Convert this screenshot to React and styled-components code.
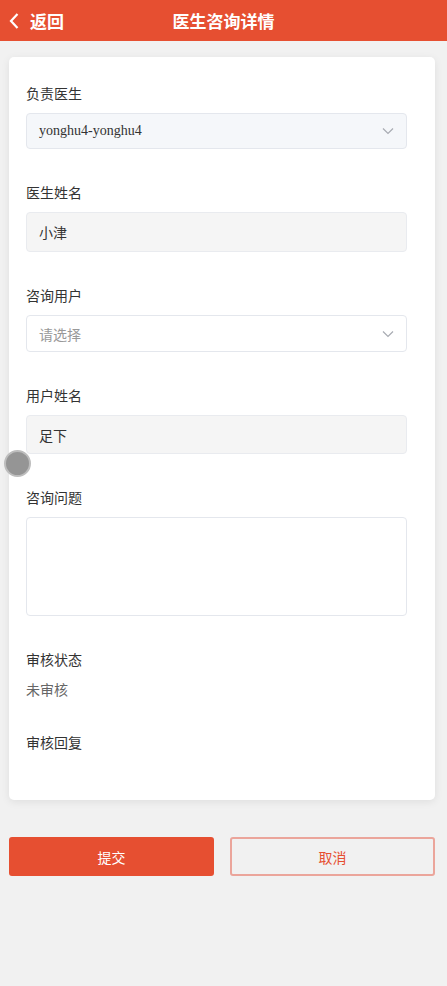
import React from 'react';
import styled, { createGlobalStyle } from 'styled-components';

const GlobalStyle = createGlobalStyle`
  html, body {
    margin: 0;
    padding: 0;
    background: #f1f1f1;
    font-family: "Noto Sans CJK SC", "Noto Sans", sans-serif;
  }
  * { box-sizing: border-box; }
`;

const Page = styled.div`
  position: relative;
  width: 447px;
  min-height: 986px;
  background: #f1f1f1;
`;

const Header = styled.div`
  height: 41px;
  background: #e64f31;
  display: flex;
  align-items: center;
  position: relative;
  color: #fff;
`;

const Back = styled.div`
  display: flex;
  align-items: center;
  gap: 11px;
  padding-left: 9px;
  font-size: 17px;
  font-weight: bold;
`;

const Title = styled.div`
  position: absolute;
  left: 0;
  right: 0;
  text-align: center;
  font-size: 17px;
  font-weight: bold;
  pointer-events: none;
`;

const Card = styled.div`
  margin: 16px 12px 0 9px;
  background: #fff;
  border-radius: 5px;
  box-shadow: 0 2px 8px rgba(0, 0, 0, 0.08);
  padding: 26px 28px 38px 17px;
`;

const Item = styled.div`
  margin-bottom: ${p => p.$mb ?? 33}px;
`;

const Label = styled.div`
  font-size: 14px;
  line-height: 20px;
  color: #333;
  margin-bottom: 10px;
`;

const Field = styled.div`
  height: ${p => p.$h || 37}px;
  border: 1px solid ${p => (p.$filled ? '#e9ebef' : '#e4e7ed')};
  border-radius: 4px;
  background: ${p => p.$bg || '#fff'};
  display: flex;
  align-items: center;
  justify-content: space-between;
  padding: 0 12px;
  font-size: 14px;
  color: ${p => p.$color || '#333'};
  font-family: ${p => (p.$serif ? '"Liberation Serif", serif' : 'inherit')};
`;

const Value = styled.div`
  font-size: 14px;
  line-height: 20px;
  color: #666;
`;

const Buttons = styled.div`
  display: flex;
  gap: 16px;
  margin: 37px 12px 0 9px;
`;

const Button = styled.div`
  flex: 1;
  height: 39px;
  border-radius: 3px;
  display: flex;
  align-items: center;
  justify-content: center;
  font-size: 14px;
  background: ${p => (p.$primary ? '#e64f31' : 'transparent')};
  color: ${p => (p.$primary ? '#fff' : '#e64f31')};
  border: 2px solid ${p => (p.$primary ? '#e64f31' : '#eba59b')};
`;

const TouchDot = styled.div`
  position: absolute;
  left: 4px;
  top: 450px;
  width: 27px;
  height: 27px;
  border-radius: 50%;
  background: #959595;
  border: 2px solid #bdbdbd;
`;

const Chevron = () => (
  <svg width="12" height="8" viewBox="0 0 12 8" fill="none">
    <path d="M1 1.5 6 6.5 11 1.5" stroke="#a8abb2" strokeWidth="1.2" />
  </svg>
);

const BackIcon = () => (
  <svg width="10" height="18" viewBox="0 0 10 18" fill="none">
    <path d="M8.5 2 2 9l6.5 7" stroke="#fff" strokeWidth="2.2" />
  </svg>
);

export default function App() {
  return (
    <Page>
      <GlobalStyle />
      <Header>
        <Back>
          <BackIcon />
          <span>返回</span>
        </Back>
        <Title>医生咨询详情</Title>
      </Header>
      <Card>
        <Item>
          <Label>负责医生</Label>
          <Field $bg="#f5f7fa" $serif $h={36}>
            <span>yonghu4-yonghu4</span>
            <Chevron />
          </Field>
        </Item>
        <Item>
          <Label>医生姓名</Label>
          <Field $bg="#f5f5f5" $filled $h={40}>小津</Field>
        </Item>
        <Item>
          <Label>咨询用户</Label>
          <Field $color="#999" $h={37}>
            <span>请选择</span>
            <Chevron />
          </Field>
        </Item>
        <Item>
          <Label>用户姓名</Label>
          <Field $bg="#f5f5f5" $filled $h={39}>足下</Field>
        </Item>
        <Item>
          <Label>咨询问题</Label>
          <Field $h={99} />
        </Item>
        <Item>
          <Label>审核状态</Label>
          <Value>未审核</Value>
        </Item>
        <Item $mb={0}>
          <Label>审核回复</Label>
        </Item>
      </Card>
      <Buttons>
        <Button $primary>提交</Button>
        <Button>取消</Button>
      </Buttons>
      <TouchDot />
    </Page>
  );
}
